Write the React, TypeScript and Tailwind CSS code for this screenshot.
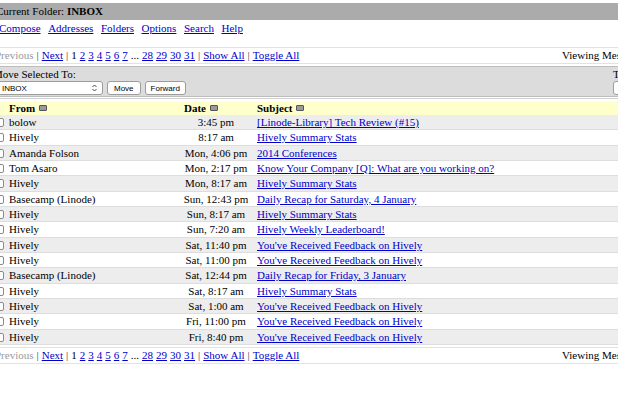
import React from 'react';

type Msg = { from: string; date: string; subject: string };

const messages: Msg[] = [
  { from: 'bolow', date: '3:45 pm', subject: '[Linode-Library] Tech Review (#15)' },
  { from: 'Hively', date: '8:17 am', subject: 'Hively Summary Stats' },
  { from: 'Amanda Folson', date: 'Mon, 4:06 pm', subject: '2014 Conferences' },
  { from: 'Tom Asaro', date: 'Mon, 2:17 pm', subject: 'Know Your Company [Q]: What are you working on?' },
  { from: 'Hively', date: 'Mon, 8:17 am', subject: 'Hively Summary Stats' },
  { from: 'Basecamp (Linode)', date: 'Sun, 12:43 pm', subject: 'Daily Recap for Saturday, 4 January' },
  { from: 'Hively', date: 'Sun, 8:17 am', subject: 'Hively Summary Stats' },
  { from: 'Hively', date: 'Sun, 7:20 am', subject: 'Hively Weekly Leaderboard!' },
  { from: 'Hively', date: 'Sat, 11:40 pm', subject: "You've Received Feedback on Hively" },
  { from: 'Hively', date: 'Sat, 11:00 pm', subject: "You've Received Feedback on Hively" },
  { from: 'Basecamp (Linode)', date: 'Sat, 12:44 pm', subject: 'Daily Recap for Friday, 3 January' },
  { from: 'Hively', date: 'Sat, 8:17 am', subject: 'Hively Summary Stats' },
  { from: 'Hively', date: 'Sat, 1:00 am', subject: "You've Received Feedback on Hively" },
  { from: 'Hively', date: 'Fri, 11:00 pm', subject: "You've Received Feedback on Hively" },
  { from: 'Hively', date: 'Fri, 8:40 pm', subject: "You've Received Feedback on Hively" },
];

const link = 'text-[#0000cc] underline';

function SortIcon() {
  return <span className="inline-block w-[8px] h-[6px] ml-[4px] rounded-[1px] border border-[#555] bg-[#9a9a9a] align-middle" />;
}

function Checkbox() {
  return <span className="inline-block shrink-0 w-[9px] h-[9px] rounded-[2px] border border-[#8a8a8a] bg-white" />;
}

function Pager() {
  return (
    <div className="grid grid-cols-[567px_1fr] h-[17px] border-y border-[#e2e2e2] items-center whitespace-nowrap">
      <div className="flex items-center">
        <span className="text-[#999]">Previous</span>
        <span className="mx-[3px] text-[#333]">|</span>
        <a className={link}>Next</a>
        <span className="mx-[3px] text-[#333]">|</span>
        <span>1</span>
        {['2', '3', '4', '5', '6', '7'].map((n) => (
          <a key={n} className={`${link} ml-[3px]`}>{n}</a>
        ))}
        <span className="ml-[3px]">...</span>
        {['28', '29', '30', '31'].map((n) => (
          <a key={n} className={`${link} ml-[3px]`}>{n}</a>
        ))}
        <span className="mx-[3px] text-[#333]">|</span>
        <a className={link}>Show All</a>
        <span className="mx-[3px] text-[#333]">|</span>
        <a className={link}>Toggle All</a>
      </div>
      <div>
        Viewing Messages: <b>1</b> to <b>15</b> (465 total)
      </div>
    </div>
  );
}

export default function App() {
  return (
    <div className="w-[618px] h-[394px] overflow-hidden bg-white text-black font-['Liberation_Serif',serif] text-[11px] leading-[15px]">
      <div className="-ml-[5px] w-[760px] pt-[3px]">
        {/* Folder bar */}
        <div className="h-[17px] bg-[#ababab] flex items-center pl-[1px]">
          Current Folder:&nbsp;<b>INBOX</b>
        </div>

        {/* Menu */}
        <div className="h-[16px] flex items-center gap-[7.6px] pl-[4px]">
          {['Compose', 'Addresses', 'Folders', 'Options', 'Search', 'Help'].map((t) => (
            <a key={t} className={link}>{t}</a>
          ))}
        </div>

        <div className="h-[11px]" />
        <Pager />

        {/* Move box */}
        <div className="mt-[2px] h-[31px] bg-[#dcdcdc] border-y border-[#bdbdbd] flex justify-between w-[628px]">
          <div className="-ml-[2px]">
            <div className="h-[14px] leading-[14px]">Move Selected To:</div>
            <div className="h-[14px] flex items-center gap-[4px] font-['Liberation_Sans',sans-serif] text-[8px]">
              <div className="w-[110px] h-[14px] rounded-[3px] border border-[#9c9c9c] bg-white flex items-center justify-between pl-[8px] pr-[5px]">
                <span>INBOX</span>
                <svg width="5" height="8" viewBox="0 0 5 8">
                  <path d="M0.5 3 L2.5 1 L4.5 3 M0.5 5 L2.5 7 L4.5 5" stroke="#333" strokeWidth="0.9" fill="none" />
                </svg>
              </div>
              <div className="h-[14px] px-[6px] rounded-[3px] border border-[#9c9c9c] bg-white flex items-center">Move</div>
              <div className="h-[14px] px-[5px] rounded-[3px] border border-[#9c9c9c] bg-white flex items-center">Forward</div>
            </div>
          </div>
          <div className="w-[10px]">
            <div className="h-[14px] leading-[14px]">T</div>
            <div className="h-[14px] w-[20px] rounded-[3px] border border-[#9c9c9c] bg-white" />
          </div>
        </div>

        {/* Message table */}
        <div className="mt-[1px] border-t border-[#d0d0d0] pt-[2px]">
          <div className="grid grid-cols-[187px_68px_1fr] h-[14px] items-center bg-[#ffffcc] font-bold leading-[14px]">
            <div className="pl-[14px] flex items-center">From<SortIcon /></div>
            <div className="pl-[2px] flex items-center">Date<SortIcon /></div>
            <div className="pl-[7px] flex items-center">Subject<SortIcon /></div>
          </div>
          {messages.map((m, i) => (
            <div
              key={i}
              className={`grid grid-cols-[187px_68px_1fr] h-[15.33px] items-center border-b border-[#dddddd] whitespace-nowrap ${i % 2 === 0 ? 'bg-[#ededed]' : 'bg-white'}`}
            >
              <div className="flex items-center gap-[5px]">
                <Checkbox />
                <span>{m.from}</span>
              </div>
              <div className="text-center">{m.date}</div>
              <div className="pl-[7px]">
                <a className={link}>{m.subject}</a>
              </div>
            </div>
          ))}
        </div>

        <div className="h-[2px]" />
        <Pager />
      </div>
    </div>
  );
}
